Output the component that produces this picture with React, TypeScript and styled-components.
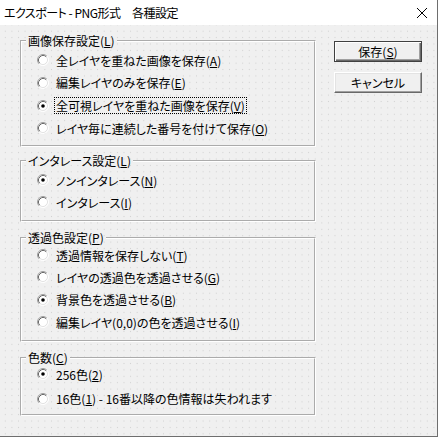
import React from 'react';
import styled, { createGlobalStyle, css } from 'styled-components';

const FONT = `"Noto Sans CJK JP", "Noto Sans", sans-serif`;

const GlobalStyle = createGlobalStyle`
  html, body { margin: 0; padding: 0; background: #f0f0f0; }
  body { font-family: ${FONT}; font-size: 12px; color: #000; }
`;

const Window = styled.div`
  width: 438px;
  height: 437px;
  box-sizing: border-box;
  display: flex;
  flex-direction: column;
  border-right: 1px solid #6e6e6e;
  border-bottom: 1px solid #6e6e6e;
  background: #f0f0f0;
  overflow: hidden;
`;

const TitleBar = styled.div`
  height: 25px;
  flex: none;
  background: #fff;
  display: flex;
  align-items: center;
  justify-content: space-between;
  padding: 0 10px 0 4px;
  box-sizing: border-box;
`;

const Title = styled.span`
  font-size: 12px;
  line-height: 1;
  font-feature-settings: "palt";
  letter-spacing: -0.5px;
  white-space: pre;
`;

const CloseIcon = styled.svg`
  display: block;
  width: 10px;
  height: 10px;
`;

const Body = styled.div`
  flex: 1;
  display: flex;
  align-items: flex-start;
  padding: 7px 0 0 20px;
  background-color: #f0f0f0;
  background-image: radial-gradient(circle at center, #d0d0d0 0 0.55px, transparent 0.95px);
  background-size: 6.6px 6.4px;
  background-position: 2px 3px;
`;

const GroupColumn = styled.div`
  width: 296px;
  display: flex;
  flex-direction: column;
`;

const Group = styled.fieldset<{ $mt: number; $pb: number }>`
  margin: ${(p) => p.$mt}px 0 0;
  padding: 0 4px ${(p) => p.$pb}px 4px;
  border: 2px groove #fff;
  min-width: 0;
`;

const Legend = styled.legend`
  padding: 0 2px;
  font-size: 12px;
  line-height: 18px;
  font-feature-settings: "palt";
  white-space: nowrap;
`;

const OptionList = styled.div<{ $pt: number; $gap: number }>`
  display: flex;
  flex-direction: column;
  margin: ${(p) => p.$pt}px 0 0 11px;
  gap: ${(p) => p.$gap}px;
`;

const OptionRow = styled.div`
  height: 20px;
  display: flex;
  align-items: center;
`;

const RadioSvg = styled.svg`
  display: block;
  width: 12px;
  height: 12px;
  flex: none;
`;

const OptionLabel = styled.span<{ $focused?: boolean }>`
  margin-left: 5px;
  padding: 0 1px;
  border: 1px dotted ${(p) => (p.$focused ? '#000' : 'transparent')};
  line-height: 15px;
  font-feature-settings: "palt";
  white-space: nowrap;
`;

const Key = styled.span`
  text-decoration: underline;
  text-underline-offset: 1px;
`;

const ButtonColumn = styled.div`
  display: flex;
  flex-direction: column;
  gap: 10px;
  margin: 9px 0 0 18px;
`;

const DialogButton = styled.button<{ $default?: boolean }>`
  width: 88px;
  height: 21px;
  box-sizing: border-box;
  padding: 0;
  margin: 0;
  font-family: ${FONT};
  font-size: 12px;
  line-height: 1;
  color: #000;
  background: #f0f0f0;
  font-feature-settings: "palt";
  border: 1px solid;
  border-color: #fff #696969 #696969 #fff;
  box-shadow: inset -1px -1px 0 #a0a0a0, inset 1px 1px 0 #e3e3e3;
  ${(p) =>
    p.$default &&
    css`
      border-color: #404040;
      box-shadow: inset 1px 1px 0 #fff, inset -1px -1px 0 #696969, inset -2px -2px 0 #a0a0a0;
    `}
`;

const Radio = ({ checked }: { checked: boolean }) => (
  <RadioSvg viewBox="0 0 12 12">
    <circle cx="6" cy="6" r="5" fill="#fff" />
    <path d="M2.11 9.89 A5.5 5.5 0 0 1 9.89 2.11" fill="none" stroke="#a0a0a0" strokeWidth="1" />
    <path d="M9.89 2.11 A5.5 5.5 0 0 1 2.11 9.89" fill="none" stroke="#ffffff" strokeWidth="1" />
    <path d="M2.82 9.18 A4.5 4.5 0 0 1 9.18 2.82" fill="none" stroke="#696969" strokeWidth="1" />
    <path d="M9.18 2.82 A4.5 4.5 0 0 1 2.82 9.18" fill="none" stroke="#e3e3e3" strokeWidth="1" />
    {checked && <circle cx="6" cy="6" r="1.8" fill="#000" />}
  </RadioSvg>
);

type Option = { pre: string; key: string; post?: string };
type GroupData = {
  title: string;
  key: string;
  options: Option[];
  selected: number;
  focused?: number;
  mt: number;
  pt: number;
  gap: number;
  pb: number;
};

const groups: GroupData[] = [
  {
    title: '画像保存設定',
    key: 'L',
    options: [
      { pre: '全レイヤを重ねた画像を保存(', key: 'A', post: ')' },
      { pre: '編集レイヤのみを保存(', key: 'E', post: ')' },
      { pre: '全可視レイヤを重ねた画像を保存(', key: 'V', post: ')' },
      { pre: 'レイヤ毎に連続した番号を付けて保存(', key: 'O', post: ')' },
    ],
    selected: 2,
    focused: 2,
    mt: 0,
    pt: 0,
    gap: 2.75,
    pb: 6.75,
  },
  {
    title: 'インタレース設定',
    key: 'L',
    options: [
      { pre: 'ノンインタレース(', key: 'N', post: ')' },
      { pre: 'インタレース(', key: 'I', post: ')' },
    ],
    selected: 0,
    mt: 5,
    pt: 0,
    gap: 2,
    pb: 8,
  },
  {
    title: '透過色設定',
    key: 'P',
    options: [
      { pre: '透過情報を保存しない(', key: 'T', post: ')' },
      { pre: 'レイヤの透過色を透過させる(', key: 'G', post: ')' },
      { pre: '背景色を透過させる(', key: 'B', post: ')' },
      { pre: '編集レイヤ(0,0)の色を透過させる(', key: 'I', post: ')' },
    ],
    selected: 2,
    mt: 7,
    pt: -2,
    gap: 2.4,
    pb: 7.4,
  },
  {
    title: '色数',
    key: 'C',
    options: [
      { pre: '256色(', key: '2', post: ')' },
      { pre: '16色(', key: '1', post: ') - 16番以降の色情報は失われます' },
    ],
    selected: 0,
    mt: 7.3,
    pt: -2.7,
    gap: 4.4,
    pb: 5.6,
  },
];

export default function App() {
  return (
    <>
      <GlobalStyle />
      <Window>
        <TitleBar>
          <Title>エクスポート - PNG形式　各種設定</Title>
          <CloseIcon viewBox="0 0 10 10">
            <path d="M0 0 L10 10 M10 0 L0 10" stroke="#000" strokeWidth="1" fill="none" />
          </CloseIcon>
        </TitleBar>
        <Body>
          <GroupColumn>
            {groups.map((g, gi) => (
              <Group key={gi} $mt={g.mt} $pb={g.pb}>
                <Legend>
                  {g.title}(<Key>{g.key}</Key>)
                </Legend>
                <OptionList $pt={g.pt} $gap={g.gap}>
                  {g.options.map((o, oi) => (
                    <OptionRow key={oi}>
                      <Radio checked={g.selected === oi} />
                      <OptionLabel $focused={g.focused === oi}>
                        {o.pre}
                        <Key>{o.key}</Key>
                        {o.post}
                      </OptionLabel>
                    </OptionRow>
                  ))}
                </OptionList>
              </Group>
            ))}
          </GroupColumn>
          <ButtonColumn>
            <DialogButton $default>
              保存(<Key>S</Key>)
            </DialogButton>
            <DialogButton>キャンセル</DialogButton>
          </ButtonColumn>
        </Body>
      </Window>
    </>
  );
}
